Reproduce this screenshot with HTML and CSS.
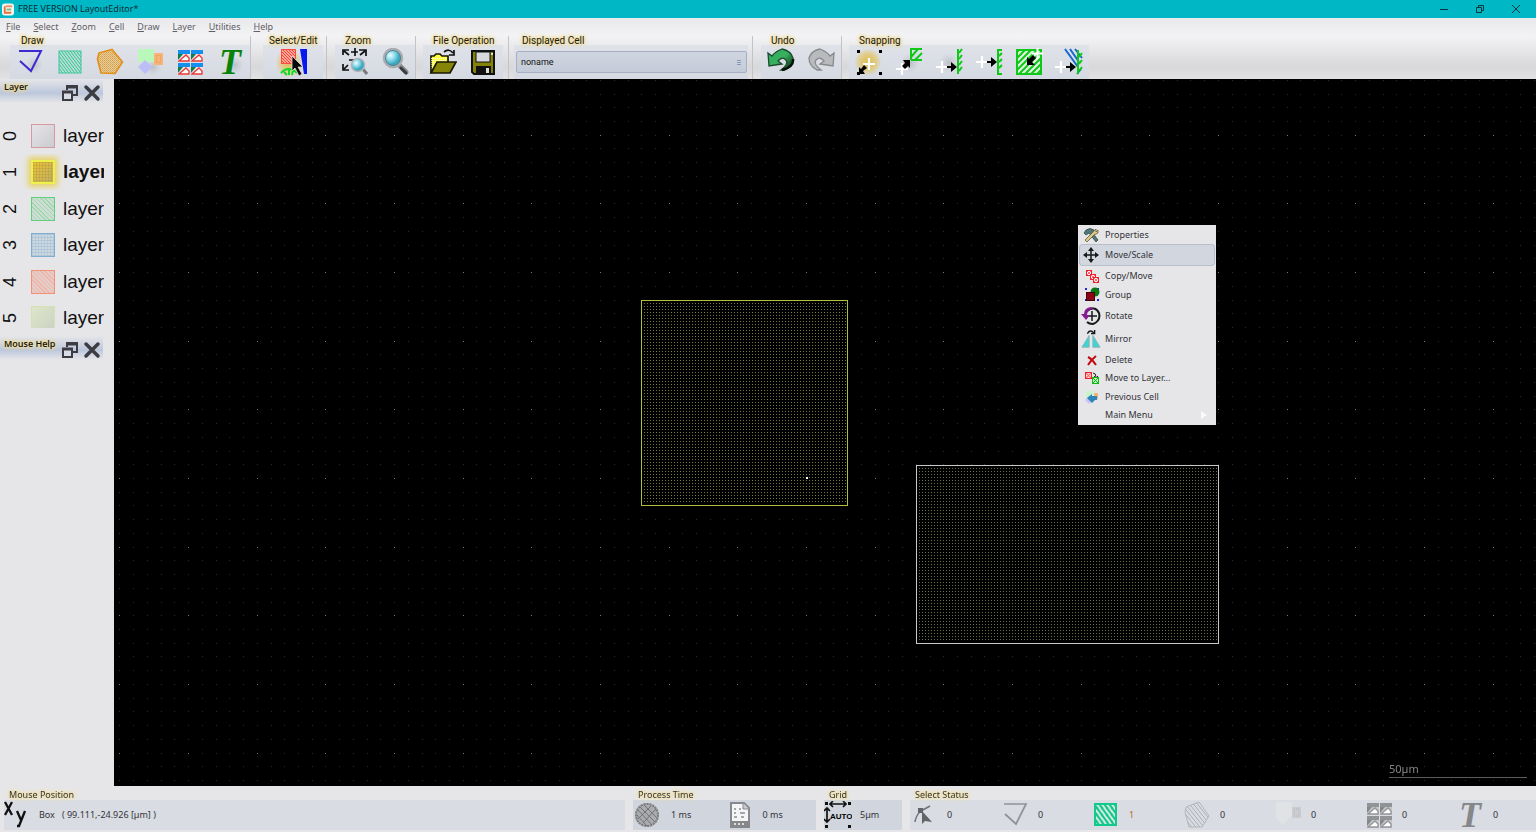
FILE: index.html
```html
<!DOCTYPE html>
<html lang="en">
<head>
<meta charset="utf-8">
<title>FREE VERSION LayoutEditor*</title>
<link rel="stylesheet" href="styles.css">
</head>
<body>
<svg class="defs" aria-hidden="true">
  <defs>
    <pattern id="hatchGreen" width="3" height="4" patternUnits="userSpaceOnUse"><path d="M0 0L3 4" stroke="#2fc596" stroke-width="1"/></pattern>
    <pattern id="hatchSel" width="5" height="7" patternUnits="userSpaceOnUse"><rect width="5" height="7" fill="#d5e8e2"/><path d="M0 0L5 7M-2 4L1 8M4 -1L7 3" stroke="#12c98c" stroke-width="2"/></pattern>
    <pattern id="hatchOrange" width="2" height="2" patternUnits="userSpaceOnUse"><rect width="2" height="2" fill="#e6cfa4"/><rect width="1" height="1" fill="#d99a3a"/><rect x="1" y="1" width="1" height="1" fill="#dcae62"/></pattern>
    <pattern id="hatchRed" width="3" height="3" patternUnits="userSpaceOnUse"><rect width="3" height="3" fill="#ffa79a"/><path d="M0 0L3 3" stroke="#ff3f30"/></pattern>
    <pattern id="hatchGrey" width="4" height="5" patternUnits="userSpaceOnUse"><path d="M0 0L4 5" stroke="#aaacb0"/></pattern>
    <pattern id="hatchSnap" width="6" height="6" patternUnits="userSpaceOnUse"><rect width="6" height="6" fill="#dcf3dc"/><path d="M-1 7L7 -1M-1 1L1 -1M5 7L7 5" stroke="#10c818" stroke-width="2"/></pattern>
    <pattern id="dotWhite" width="2" height="2" patternUnits="userSpaceOnUse"><rect width="1" height="1" fill="#fff"/></pattern>
    <radialGradient id="glow"><stop offset="0" stop-color="#e0be50"/><stop offset=".5" stop-color="#e0c878" stop-opacity=".8"/><stop offset="1" stop-color="#e0cf96" stop-opacity="0"/></radialGradient>
    <radialGradient id="shade"><stop offset="0" stop-color="#a9abb0" stop-opacity=".6"/><stop offset="1" stop-color="#c0c2c8" stop-opacity="0"/></radialGradient>
    <radialGradient id="lens" cx=".35" cy=".35"><stop offset="0" stop-color="#f0fcff"/><stop offset=".5" stop-color="#90dcec"/><stop offset="1" stop-color="#38a8c0"/></radialGradient>
    <linearGradient id="undoFill" x2="1" y2="1"><stop offset="0" stop-color="#2fae5a"/><stop offset=".5" stop-color="#38b060"/><stop offset="1" stop-color="#061808"/></linearGradient>
    <symbol id="cursorPlus" viewBox="0 0 11 11"><path d="M5.500 0V11M0 5.500H11" stroke="#fff" stroke-width="2"/></symbol>
    <symbol id="tile" viewBox="0 0 12 12"><rect width="12" height="12" fill="var(--tile-bg,#f2dfe2)"/><path d="M0 0H12V4H0Z" fill="var(--tile-a,#1590ee)"/><path d="M0 4H5L0 10Z" fill="var(--tile-b,#117d4c)"/><path d="M1 11L8 5L11 8V11Z" fill="#fff" stroke="var(--tile-c,#e63a3a)" stroke-width="1.400"/></symbol>
    <symbol id="array" viewBox="0 0 28 28"><use href="#tile" x="2" y="2" width="12" height="12"/><use href="#tile" x="15" y="2" width="12" height="12"/><use href="#tile" x="2" y="15" width="12" height="12"/><use href="#tile" x="15" y="15" width="12" height="12"/></symbol>
    <symbol id="restore" viewBox="0 0 18 18"><path d="M6 6V2H16V11H12" fill="none" stroke="#3c3c42" stroke-width="2"/><path d="M5 3H17" stroke="#3c3c42" stroke-width="3"/><rect x="2" y="8" width="9" height="8" fill="#d8dce4" stroke="#3c3c42" stroke-width="2"/><path d="M1 8H12" stroke="#3c3c42" stroke-width="3"/></symbol>
    <symbol id="cross" viewBox="0 0 18 18"><path d="M3 3L15 15M15 3L3 15" stroke="#3c3c42" stroke-width="3.500" stroke-linecap="round"/></symbol>
    <symbol id="redbox" viewBox="0 0 6 6"><rect x=".5" y=".5" width="5" height="5" fill="#fff" stroke="#f01f2c"/><path d="M1 1L5 5M5 1L1 5" stroke="#f66"/></symbol>
  </defs>
</svg>
<header class="titlebar">
  <svg class="logo" viewBox="0 0 13 13"><rect width="13" height="13" rx="3" fill="#f3f6ee"/><path d="M3 3V10H10" fill="none" stroke="#e8703c" stroke-width="2"/><path d="M4 3H11" stroke="#ee8b6a" stroke-width="2"/><path d="M5 6.500H10" stroke="#7cb87c" stroke-width="2"/></svg>
  <h1>FREE VERSION LayoutEditor*</h1>
  <button aria-label="Minimize"><svg viewBox="0 0 10 10"><path d="M1 5.500H9" stroke="#06363c"/></svg></button>
  <button aria-label="Restore"><svg viewBox="0 0 10 10"><path d="M1.500 3.500H6.500V8.500H1.500ZM3.500 3V1.500H8.500V6.500H7" fill="none" stroke="#06363c"/></svg></button>
  <button aria-label="Close"><svg viewBox="0 0 10 10"><path d="M1 1L9 9M9 1L1 9" stroke="#06363c"/></svg></button>
</header>
<div class="chrome">
  <nav class="menubar">
    <a href="#file"><u>F</u>ile</a><a href="#select"><u>S</u>elect</a><a href="#zoom"><u>Z</u>oom</a><a href="#cell"><u>C</u>ell</a><a href="#draw"><u>D</u>raw</a><a href="#layer"><u>L</u>ayer</a><a href="#utilities"><u>U</u>tilities</a><a href="#help"><u>H</u>elp</a>
  </nav>
  <div class="toolbar">
    <section class="group draw"><h2>Draw</h2><div class="tools">
      <button aria-label="Path"><svg viewBox="0 0 28 28"><circle cx="18" cy="17" r="9" fill="url(#shade)"/><path d="M3 3H25L15 23L4 13" fill="none" stroke="#3c2bd0" stroke-width="2"/></svg></button>
      <button aria-label="Box"><svg viewBox="0 0 28 28"><rect x="3" y="3" width="22" height="22" fill="#b5ddd0"/><rect x="3" y="3" width="22" height="22" fill="url(#hatchGreen)" stroke="#3cc79a"/></svg></button>
      <button aria-label="Polygon"><svg viewBox="0 0 28 28"><path d="M3 5L16 1.500L26.500 14L19 25.500L5 25L1.500 11Z" fill="url(#hatchOrange)" stroke="#e0921c" stroke-width="1.700"/></svg></button>
      <button aria-label="Cell"><svg viewBox="0 0 28 28"><circle cx="17" cy="19" r="9" fill="url(#shade)"/><path d="M2 1H18V14H2Z" fill="#b9f7bb"/><path d="M9 12L16 19L9 26L2 19Z" fill="#bdbdf8"/><path d="M18 5H27V17H18Z" fill="#f7b478"/><path d="M20.500 7.500H24.500V14.500H20.500Z" fill="none" stroke="#ee9448" stroke-dasharray="1 1"/></svg></button>
      <button aria-label="Array"><svg viewBox="0 0 28 28"><use href="#array"/></svg></button>
      <button aria-label="Text"><svg viewBox="0 0 28 28"><circle cx="19" cy="17" r="9" fill="url(#shade)"/><text class="tglyph" x="3" y="26" fill="#0a830c">T</text></svg></button>
    </div></section>
    <section class="group select"><h2>Select/Edit</h2><div class="tools">
      <button aria-label="Select"><svg class="wide" viewBox="0 0 32 30"><circle cx="12" cy="16" r="15" fill="url(#glow)"/><rect x="4.500" y="2.500" width="14" height="14" fill="url(#hatchRed)" stroke="#ff4a3a"/><path d="M23 2H30V27H27Z" fill="#0719ef"/><path d="M4 26Q11 18 20 26M7 25L10 28M12 22V28M16 23L15 28" fill="none" stroke="#11dc22" stroke-width="2"/><path d="M15 9V24L18 21L22 29L25 27L21 20H26Z" fill="#080808" stroke="#ddd" stroke-width=".800"/></svg></button>
    </div></section>
    <section class="group zoom"><h2>Zoom</h2><div class="tools">
      <button aria-label="Zoom fit"><svg viewBox="0 0 28 28"><path d="M2 7V2H8M3 3L8 7M18 2H25V8M19 7L24 3M2 16V22H8M3 21L7 17M14 0V8M10 4H17M8 12H13" fill="none" stroke="#111" stroke-width="1.700"/><path d="M21 20L26 26" stroke="#77797c" stroke-width="3"/><circle cx="17" cy="17" r="6.500" fill="url(#lens)" stroke="#b1b3b8" stroke-width="1.500"/></svg></button>
      <button aria-label="Zoom"><svg viewBox="0 0 28 28"><path d="M18 17L25 24" stroke="#8a8c90" stroke-width="5" stroke-linecap="round"/><path d="M20 20L25 25" stroke="#3c3d40" stroke-width="3" stroke-linecap="round"/><circle cx="12" cy="10" r="9" fill="url(#lens)" stroke="#a9acb0" stroke-width="2.500"/><circle cx="12" cy="10" r="7.500" fill="none" stroke="#56838c"/></svg></button>
    </div></section>
    <section class="group file"><h2>File Operation</h2><div class="tools">
      <button aria-label="Open"><svg viewBox="0 0 28 28"><path d="M2 25V8H5L7 6H11L13 8H19V14" fill="#ffff42" stroke="#181800" stroke-width="1.700"/><path d="M2 9H18V15H7L3 23Z" fill="url(#dotWhite)"/><path d="M2 25L8 14H27L21 25Z" fill="#85850a" stroke="#181800" stroke-width="1.700"/><path d="M15 4Q20 0 24 5M25 2V7H20" fill="none" stroke="#111" stroke-width="1.700"/></svg></button>
      <button aria-label="Save"><svg viewBox="0 0 28 28"><path d="M3 3H25V26H5L3 24Z" fill="#838308" stroke="#111" stroke-width="2"/><rect x="7" y="4" width="14" height="10" fill="#d7d9dc" stroke="#111"/><path d="M7 18H22V26H7Z" fill="#111"/><path d="M17 20H20V25H17Z" fill="#dedfdd"/><path d="M22 5H24V7H22Z" fill="#ddd"/></svg></button>
    </div></section>
    <section class="group displayed"><h2><label for="cell">Displayed Cell</label></h2><div class="tools combo"><select id="cell"><option>noname</option></select><svg viewBox="0 0 4 5"><path d="M0 .500H4M0 2.500H4M0 4.500H4" stroke="#8399bd"/></svg></div></section>
    <section class="group undo"><h2>Undo</h2><div class="tools">
      <button aria-label="Undo"><svg viewBox="0 0 28 28"><path d="M1 5L5 8Q9 3 15 1Q24 3 26 10Q26 18 18 22L14 22Q22 16 19 12Q15 8 11 13L15 16L2 18Z" fill="url(#undoFill)" stroke="#1c4c2c" stroke-width="1.300"/><path d="M26 11Q27 19 15 22" fill="none" stroke="#071008" stroke-width="2.500"/></svg></button>
      <button aria-label="Redo"><svg viewBox="0 0 28 28"><path d="M27 5L23 8Q19 3 13 1Q4 3 2 10Q2 18 10 22L14 22Q6 16 9 12Q13 8 17 13L13 16L26 18Z" fill="#b8babd" stroke="#88898c" stroke-width="1.300"/></svg></button>
    </div></section>
    <section class="group snapping"><h2>Snapping</h2><div class="tools">
      <button aria-label="Snap to grid"><svg viewBox="0 0 28 28"><circle cx="13" cy="14" r="14" fill="url(#glow)"/><circle cx="13" cy="14" r="13" fill="url(#glow)"/><path d="M2 2H5V5H2ZM24 2H27V5H24ZM2 24H5V27H2ZM24 24H27V27H24Z"/><path d="M4 26V19L6 21L9 17L12 20L8 23L10 26Z"/><use href="#cursorPlus" x="8" y="10" width="12" height="12"/></svg></button>
      <button aria-label="Snap to corner"><svg viewBox="0 0 28 28"><circle cx="15" cy="15" r="10" fill="url(#shade)"/><path d="M16 12V1H27M16 12H27M16 9L23 1M20 12L27 5" fill="none" stroke="#10c818" stroke-width="2"/><use href="#cursorPlus" x="1" y="15" width="12" height="12"/><path d="M15 12V20L13 18L10 21L7 18L10 15L8 12Z"/></svg></button>
      <button aria-label="Snap to edge"><svg viewBox="0 0 28 28"><circle cx="14" cy="15" r="10" fill="url(#shade)"/><path d="M23 1V26M24 5L27 1M24 11L27 7M24 17L27 13M24 23L27 19" stroke="#10c818" stroke-width="2"/><use href="#cursorPlus" x="1" y="13" width="12" height="12"/><path d="M12 18H16V14L22 19L16 24V20H12Z"/></svg></button>
      <button aria-label="Snap to middle"><svg viewBox="0 0 28 28"><path d="M27 2H23V26H27M24 8L27 5M24 14L27 11M24 20L27 17" fill="none" stroke="#10c818" stroke-width="2"/><use href="#cursorPlus" x="1" y="8" width="12" height="12"/><path d="M12 13H16V9L22 14L16 19V15H12Z"/></svg></button>
      <button aria-label="Snap to centre"><svg viewBox="0 0 28 28"><rect x="2" y="2" width="24" height="24" fill="url(#hatchSnap)" stroke="#10c818" stroke-width="2"/><path d="M12 17V9L14 11L18 7L21 10L17 14L20 17Z"/><use href="#cursorPlus" x="17" y="0" width="11" height="11"/></svg></button>
      <button aria-label="Snap to intersection"><svg viewBox="0 0 28 28"><path d="M10 1L23 19M15 1L24 14M20 1L27 10M22 26L26 21" stroke="#1766d4" stroke-width="2"/><path d="M23 2V26M24 9L27 5M24 16L27 12M24 23L27 19" stroke="#10c818" stroke-width="2"/><use href="#cursorPlus" x="0" y="13" width="12" height="12"/><path d="M11 18H15V14L21 19L15 24V20H11Z"/></svg></button>
    </div></section>
  </div>
</div>
<main class="workspace">
  <aside class="sidebar">
    <section class="dock layers">
      <header><h2>Layer</h2><button aria-label="Float layer panel"><svg><use href="#restore"/></svg></button><button aria-label="Close layer panel"><svg><use href="#cross"/></svg></button></header>
      <ol>
        <li><span class="num">0</span><i class="swatch s0"></i><span>layer</span></li>
        <li class="active"><span class="num">1</span><i class="swatch s1"></i><span>layer</span></li>
        <li><span class="num">2</span><i class="swatch s2"></i><span>layer</span></li>
        <li><span class="num">3</span><i class="swatch s3"></i><span>layer</span></li>
        <li><span class="num">4</span><i class="swatch s4"></i><span>layer</span></li>
        <li><span class="num">5</span><i class="swatch s5"></i><span>layer</span></li>
      </ol>
    </section>
    <section class="dock">
      <header><h2>Mouse Help</h2><button aria-label="Float mouse help"><svg><use href="#restore"/></svg></button><button aria-label="Close mouse help"><svg><use href="#cross"/></svg></button></header>
    </section>
  </aside>
  <div class="drawing">
    <canvas id="view"></canvas>
    <div class="scale">50µm</div>
    <div class="context" role="menu">
      <button role="menuitem"><svg viewBox="0 0 20 20"><path d="M5 5Q9 2 13 5L11 7L17 15L15 17L8 8L5 10L3 8Z" fill="#507a78" stroke="#2a3c3c" stroke-width=".700"/><path d="M15 4L12 7L4 15L6 17L13 10L17 8V5L15 7Z" fill="#d8c88c" stroke="#56502c" stroke-width=".700"/></svg>Properties</button>
      <button role="menuitem" class="hot"><svg viewBox="0 0 20 20"><path d="M10 4V16M4 10H16" stroke="#16181c" stroke-width="1.500"/><path d="M10 2L13 6H7ZM10 18L13 14H7ZM2 10L6 7V13ZM18 10L14 7V13Z" fill="#16181c"/></svg>Move/Scale</button>
      <button role="menuitem"><svg viewBox="0 0 20 20"><use href="#redbox" x="5" y="4" width="6" height="6"/><use href="#redbox" x="9" y="8" width="6" height="6"/><use href="#redbox" x="12" y="11" width="6" height="6"/></svg>Copy/Move</button>
      <button role="menuitem"><svg viewBox="0 0 20 20"><path d="M4 3H6V5H4ZM16 3H18V5H16ZM4 14H6V16H4ZM16 14H18V16H16Z" fill="#2224e0"/><circle cx="14" cy="7" r="4.500" fill="#0a7a12"/><rect x="5.500" y="7.500" width="8" height="8" fill="#8d0515" stroke="#40040c"/></svg>Group</button>
      <button role="menuitem"><svg viewBox="0 0 20 20"><path d="M6 5Q14 -1 18 7Q20 15 12 18Q8 18 6 16" fill="none" stroke="#16181c" stroke-width="2"/><path d="M11 5V15M6 10H16" stroke="#16181c" stroke-width="1.500"/><path d="M13 2Q6 4 6 9H9L5 14L0 8H3Q3 2 10 1Z" fill="#861b92"/></svg>Rotate</button>
      <button role="menuitem"><svg class="mirror" viewBox="0 0 22 22"><path d="M1 20L9 7V20ZM21 20L13 7V20Z" fill="#3ed4d4" stroke="#8cb3b8"/><path d="M7 5Q10 0 14 4M15 1V5H11" fill="none" stroke="#16181c" stroke-width="1.500"/></svg>Mirror</button>
      <button role="menuitem"><svg viewBox="0 0 20 20"><path d="M7 7Q11 9 15 15M15 6Q10 10 7 15" fill="none" stroke="#c40a10" stroke-width="2"/></svg>Delete</button>
      <button role="menuitem"><svg viewBox="0 0 20 20"><use href="#redbox" x="4" y="4" width="7" height="7"/><path d="M12 5Q15 5 15 9M13 8L15 10L17 8" fill="none" stroke="#222"/><rect x="11.500" y="9.500" width="6" height="6" fill="#bdf2b6" stroke="#14b81c"/><path d="M12 10L17 15M17 10L12 15" stroke="#14b81c"/></svg>Move to Layer...</button>
      <button role="menuitem"><svg viewBox="0 0 20 20"><path d="M5 4H12V11H5Z" fill="#c5f5c8"/><path d="M8 9L12 13L8 17L4 13Z" fill="#c7c5fa"/><path d="M13 6H17V12H13Z" fill="#eeb47c"/><path d="M6 11L11 7V9H16V13H14L11 16Z" fill="#2e86b8"/></svg>Previous Cell</button>
      <button role="menuitem" class="sub"><svg viewBox="0 0 20 20"></svg>Main Menu<svg class="arrow" viewBox="0 0 8 8"><path d="M1 0L7 4L1 8Z" fill="#fafafa"/></svg></button>
    </div>
  </div>
</main>
<footer class="status">
  <section class="mouse"><h2>Mouse Position</h2><div class="cells"><div class="cell"><svg viewBox="0 0 28 28"><path d="M4 1L11 14M11 1L4 14M16 10L20 19M24 10L18 25H16" fill="none" stroke="#111" stroke-width="2.300"/></svg><output>Box &nbsp; ( 99.111,-24.926 [µm] )</output></div></div></section>
  <section class="process"><h2>Process Time</h2><div class="cells">
    <div class="cell"><svg viewBox="0 0 28 28"><circle cx="14" cy="14" r="12" fill="#a9abad"/><circle cx="14" cy="14" r="11" fill="none" stroke="#7d7f82" stroke-width="2" stroke-dasharray="2 1"/><path d="M5 9L19 24M7 6L22 21M11 4L24 17M4 14L14 25M5 18L18 5M10 22L23 8" stroke="#717477"/></svg><output>1 ms</output></div>
    <div class="cell"><svg viewBox="0 0 28 28"><path d="M6 2H19L24 7V26H6Z" fill="#f4f5f7" stroke="#88898d" stroke-width="2"/><path d="M18 2V8H24" fill="#c9cbce" stroke="#88898d"/><path d="M9 8H11M14 8H16M9 12H11M15 12H20M9 16H12M16 16H19" stroke="#a4a6a9" stroke-width="2"/><path d="M5 20H25V27H5Z" fill="#85878a"/><path d="M9 23H20" stroke="#ddd" stroke-width="2" stroke-dasharray="2 2"/></svg><output>0 ms</output></div>
  </div></section>
  <section class="grid"><h2>Grid</h2><div class="cells"><div class="cell"><svg viewBox="0 0 28 28"><path d="M1 1H4V4H1ZM24 1H27V4H24ZM1 24H4V27H1ZM24 24H27V27H24Z" fill="#111"/><path d="M6 3H22M9 0L6 3L9 6M19 0L22 3L19 6M3 7V20M0 10L3 7L6 10M0 18L3 21L6 18" fill="none" stroke="#111" stroke-width="1.700"/><text class="auto" x="6" y="18">AUTO</text></svg><output>5µm</output></div></div></section>
  <section class="selection"><h2>Select Status</h2><div class="cells">
    <div class="cell"><svg viewBox="0 0 28 28"><path d="M5 21Q6 14 11 10L20 5" fill="none" stroke="#727479" stroke-width="1.500"/><path d="M8 7H13V12H8Z" fill="#626468"/><path d="M12 10V23L15 20L22 21Z" fill="#626468"/></svg><output>0</output></div>
    <div class="cell"><svg viewBox="0 0 28 28"><path d="M3 3H25L15 23L4 13" fill="none" stroke="#909296" stroke-width="1.700"/></svg><output>0</output></div>
    <div class="cell"><svg viewBox="0 0 28 28"><rect x="3" y="3" width="21" height="21" fill="url(#hatchSel)" stroke="#12c98c" stroke-width="2"/></svg><output class="one">1</output></div>
    <div class="cell"><svg viewBox="0 0 28 28"><path d="M3 6L16 1L26 15L19 26H6L2 11Z" fill="url(#hatchGrey)" stroke="#b4b6ba"/></svg><output>0</output></div>
    <div class="cell"><svg viewBox="0 0 28 28"><path d="M2 1H18V14L9 24L2 17Z" fill="#e1e2e5"/><path d="M18 6H27V17H18Z" fill="#cbcdd1"/><path d="M20 8H25V15H20Z" fill="none" stroke="#b4b6ba" stroke-dasharray="1 1"/></svg><output>0</output></div>
    <div class="cell"><svg class="mono" viewBox="0 0 28 28"><use href="#array"/></svg><output>0</output></div>
    <div class="cell"><svg viewBox="0 0 28 28"><text class="tglyph" x="3" y="26" fill="#85878b">T</text></svg><output>0</output></div>
  </div></section>
</footer>
<script src="view.js"></script>
</body>
</html>
```
FILE: styles.css
```css
* { box-sizing: border-box; }
body {
  margin: 0;
  height: 100vh;
  display: flex;
  flex-direction: column;
  overflow: hidden;
  background: #e6e6e9;
  color: #222;
  font: 9px/14px "Noto Sans", "Open Sans", sans-serif;
}
.defs { position: absolute; width: 0; height: 0; }
button { border: 0; padding: 0; background: none; font: inherit; color: inherit; display: flex; align-items: center; justify-content: center; }
h1, h2 { margin: 0; font: inherit; }
a { color: inherit; text-decoration: none; }
svg { display: block; }

.titlebar { display: flex; align-items: center; height: 18px; padding: 0 2px; background: #00b7c6; color: #05262a; }
.titlebar h1 { flex: 1; margin-left: 4px; font-family: "Open Sans", sans-serif; }
.titlebar .logo { width: 12px; height: 13px; }
.titlebar button { width: 36px; height: 18px; }
.titlebar button svg { width: 10px; height: 10px; }

.chrome { background: linear-gradient(#e9e9eb, #f3f3f5 30%, #d8d8da 80%, #e2e2e4); }
.menubar { display: flex; gap: 13px; height: 18px; padding: 2px 6px; color: #606066; }
.toolbar { display: flex; height: 43px; }
.group { display: flex; flex-direction: column; border-right: 1px solid #c2c3c8; }
.group h2 { height: 9px; font: 10px/10px Roboto, sans-serif; padding-left: 10px; z-index: 1; color: #1d1a10; }
.group.draw { padding-left: 10px; }
.group.draw h2 { padding-left: 11px; }
.group.select { padding: 0 3px 0 12px; }
.group.select h2 { padding-left: 6px; }
.group.zoom { padding-left: 8px; }
.group.file { padding: 0 5px 0 7px; }
.group.displayed { padding: 0 4px 0 5px; }
.group.displayed h2 { padding-left: 8px; }
.group.undo { padding-left: 8px; }
.group.snapping { padding-left: 7px; border: 0; }
.group h2, .status h2, .dock h2 { text-shadow: 0 0 2px #efdc98, 0 0 4px #eedb96, 0 0 4px #eedb96, 0 0 4px #eedb96; }
.tools { display: flex; height: 34px; background: linear-gradient(#dfe2e9, #d5d9e1); }
.tools button { width: 40px; }
.select .tools button { width: 60px; }
.tools button svg { width: 28px; height: 28px; }
.tools button svg.wide { width: 32px; height: 30px; }
.tglyph { font: italic bold 36px "Liberation Serif", serif; }
.combo { width: 234px; align-items: center; padding: 0 1px 0 2px; }
.combo select { appearance: none; flex: 1; height: 22px; padding: 0 4px; border: 1px solid #a6b0c2; border-radius: 2px; background: linear-gradient(#d0d6e1, #c4cbd8); font: 9px Roboto, sans-serif; color: #111; }
.combo svg { width: 4px; height: 5px; margin-left: -10px; margin-right: 6px; }

.workspace { flex: 1; display: flex; min-height: 0; }
.sidebar { width: 114px; }
.layers { height: 257px; }
.dock header { display: flex; height: 28px; margin-right: 11px; background: linear-gradient(transparent, #bcc7dc 50%, transparent 85%); }
.dock h2 { flex: 1; min-width: 0; padding-left: 4px; font-family: "Open Sans", sans-serif; font-weight: 600; color: #111; white-space: nowrap; line-height: 15px; }
.dock button { width: 22px; height: 28px; flex: none; }
.dock button svg { width: 18px; height: 18px; }
.dock ol { list-style: none; margin: 10px 10px 0 0; padding: 0; height: 211px; overflow: hidden; display: grid; grid-template-rows: repeat(3, 37px 36px); }
.dock li { display: flex; align-items: center; min-width: 0; overflow: hidden; font: 19px/24px "Liberation Sans", sans-serif; color: #111; }
.dock li.active { font-weight: bold; }
.num { flex: none; width: 20px; height: 24px; text-align: center; transform: rotate(-90deg); font-size: 18px; font-weight: normal; margin-right: 11px; }
.swatch { width: 24px; height: 24px; margin-right: 8px; border: 1px solid; flex: none; }
.s0 { color: #d49a9e; background: linear-gradient(135deg, #e6e3e6, #cbccd0); }
.s1 { color: #eef04c; border-width: 2px; background: repeating-linear-gradient(90deg, #a89a4066 0 1px, transparent 1px 3px), repeating-linear-gradient(#a89a4066 0 1px, transparent 1px 3px), linear-gradient(135deg, #f0c030, #c4b066); box-shadow: 0 0 6px 3px #e6d268; }
.s2 { color: #62cf80; background: repeating-linear-gradient(45deg, #a0d8b0 0 1px, #cfddd4 1px 3px); }
.s3 { color: #80aed0; background: repeating-linear-gradient(90deg, #9cbcd266 0 1px, transparent 1px 3px), repeating-linear-gradient(#b0c8da 0 1px, #ccd6df 1px 3px); }
.s4 { color: #f29078; background: repeating-linear-gradient(45deg, #f0b4a8 0 1px, #e4ccc9 1px 3px); }
.s5 { color: #d3e2b0; background: linear-gradient(135deg, #dde6c8, #ccd2c4); }

.drawing { flex: 1; position: relative; min-width: 0; background: #000; overflow: hidden; }
.drawing canvas { position: absolute; inset: 0; width: 100%; height: 100%; }
.scale { position: absolute; right: 9px; bottom: 8px; width: 138px; border-bottom: 1px solid #5c5c5c; color: #858585; font-size: 11px; line-height: 16px; }
.context { position: absolute; left: 964px; top: 146px; width: 138px; padding: 0 1px 1px; background: #e6e6e9; display: grid; grid-template-rows: 19px 22px 20px 18px 23px 24px 18px 18px 19px 18px; }
.context button { justify-content: flex-start; padding-left: 2px; border-radius: 4px; gap: 4px; color: #333338; }
.context .hot { background: #d2d7df; box-shadow: 0 0 0 1px #b9bfca inset; }
.context svg { width: 20px; height: 20px; }
.context .sub .arrow { width: 8px; height: 8px; margin: 0 7px 0 auto; }

.status { display: flex; gap: 8px; height: 46px; padding: 4px 0 2px 4px; color: #333338; }
.status section { display: flex; flex-direction: column; flex: none; }
.status h2 { height: 10px; line-height: 10px; padding-left: 5px; z-index: 1; white-space: nowrap; }
.cells { display: flex; height: 30px; background: #d9dce3; align-items: center; }
.cell { display: flex; align-items: center; gap: 8px; }
.cell svg { width: 28px; height: 28px; flex: none; }
.mouse { width: 621px; }
.mouse .cell { margin-left: -3px; gap: 10px; }
.process { width: 183px; }
.process .cells { background: #d0d5de; }
.process .cell { width: 97px; gap: 10px; }
.grid { width: 78px; }
.grid .cells { background: #d0d5de; }
.auto { font: bold 8px "Liberation Sans Narrow", "Liberation Sans", sans-serif; }
.status .selection { flex: 1; min-width: 0; }
.selection .cell { flex: 0 0 91px; gap: 9px; }
.one { color: #c06a20; }
.mono { --tile-bg: #c4c6ca; --tile-a: #919397; --tile-b: #85878b; --tile-c: #94969a; }
```
FILE: view.js
```javascript
const canvas = document.getElementById("view");
const ctx = canvas.getContext("2d");
const step = 13.73;
const origin = { x: 692, y: 399 };

function dots(color, x0, y0, x1, y1, pitch) {
  ctx.fillStyle = color;
  for (let y = y0; y < y1; y += pitch)
    for (let x = x0; x < x1; x += pitch) ctx.fillRect(Math.round(x), Math.round(y), 1, 1);
}

function box(x, y, w, h, line, fill) {
  ctx.fillStyle = "#000";
  ctx.fillRect(x, y, w, h);
  dots(fill, x + 3, y + 3, x + w - 1, y + h - 1, 3);
  ctx.strokeStyle = line;
  ctx.strokeRect(x + 0.5, y + 0.5, w, h);
}

function draw() {
  canvas.width = canvas.clientWidth;
  canvas.height = canvas.clientHeight;
  const w = canvas.width, h = canvas.height;
  dots("#2c2c2c", origin.x % step, origin.y % step, w, h, step);
  dots("#787878", origin.x % (step * 5), origin.y % (step * 5), w, h, step * 5);
  box(527, 221, 206, 205, "#b2bf3e", "#77773c");
  box(802, 386, 302, 178, "#c8c8c8", "#6c6c48");
  ctx.fillStyle = "#fff";
  ctx.fillRect(origin.x, origin.y - 1, 2, 2);
}

draw();
addEventListener("resize", draw);
```
